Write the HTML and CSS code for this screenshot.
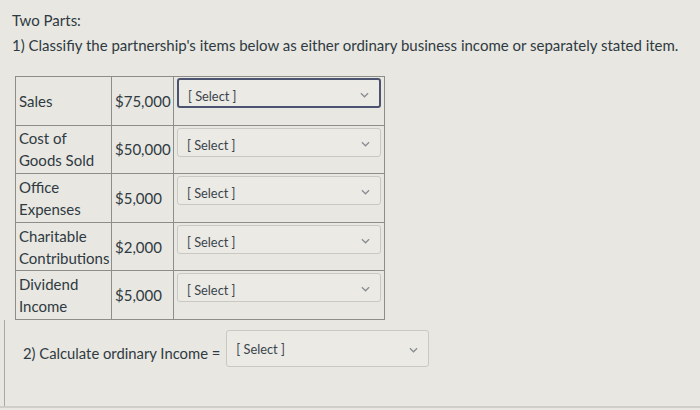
FILE: index.html
```html
<!DOCTYPE html>
<html>
<head>
<meta charset="utf-8">
<link rel="stylesheet" href="styles.css">
</head>
<body>
<div class="page">
  <p class="title">Two Parts:</p>
  <p class="intro">1) Classifiy the partnership's items below as either ordinary business income or separately stated item.</p>
  <table class="items">
    <tr>
      <td class="name">Sales</td>
      <td class="amt">$75,000</td>
      <td class="pick"><div class="select focused"><span>[ Select ]</span><svg class="chev" viewBox="0 0 10 6"><path d="M1 1l4 4 4-4"/></svg></div></td>
    </tr>
    <tr>
      <td class="name">Cost of<br>Goods Sold</td>
      <td class="amt">$50,000</td>
      <td class="pick"><div class="select"><span>[ Select ]</span><svg class="chev" viewBox="0 0 10 6"><path d="M1 1l4 4 4-4"/></svg></div></td>
    </tr>
    <tr>
      <td class="name">Office<br>Expenses</td>
      <td class="amt">$5,000</td>
      <td class="pick"><div class="select"><span>[ Select ]</span><svg class="chev" viewBox="0 0 10 6"><path d="M1 1l4 4 4-4"/></svg></div></td>
    </tr>
    <tr>
      <td class="name">Charitable<br>Contributions</td>
      <td class="amt">$2,000</td>
      <td class="pick"><div class="select"><span>[ Select ]</span><svg class="chev" viewBox="0 0 10 6"><path d="M1 1l4 4 4-4"/></svg></div></td>
    </tr>
    <tr>
      <td class="name">Dividend<br>Income</td>
      <td class="amt">$5,000</td>
      <td class="pick"><div class="select"><span>[ Select ]</span><svg class="chev" viewBox="0 0 10 6"><path d="M1 1l4 4 4-4"/></svg></div></td>
    </tr>
  </table>
  <div class="calc">
    <span class="calc-label">2) Calculate ordinary Income =</span>
    <div class="select wide"><span>[ Select ]</span><svg class="chev" viewBox="0 0 10 6"><path d="M1 1l4 4 4-4"/></svg></div>
  </div>
</div>
</body>
</html>
```
FILE: styles.css
```css
html, body {
  margin: 0;
  padding: 0;
}
body {
  width: 700px;
  height: 410px;
  overflow: hidden;
  background: #e8e7e1;
  font-family: Lato, "Open Sans", sans-serif;
  color: #2f3a42;
}
.page {
  height: 408px;
  border-bottom: 2px solid #cfcec8;
  padding: 10px 0 0 12px;
  box-sizing: border-box;
  position: relative;
}
.title {
  margin: 0;
  font-size: 15px;
  line-height: 20px;
}
.intro {
  margin: 5px 0 0 0;
  font-size: 15px;
  line-height: 20px;
}
.items {
  margin: 21px 0 0 3px;
  border-collapse: collapse;
}
.items td {
  border: 1px solid #8d8d89;
  padding: 0;
  height: 48.6px;
  box-sizing: border-box;
  font-size: 15px;
  line-height: 22px;
}
.name {
  width: 96px;
  padding-left: 3px !important;
  vertical-align: middle;
}
.amt {
  width: 62px;
  padding-left: 3px !important;
  vertical-align: middle;
}
.pick {
  width: 211px;
  vertical-align: top;
  padding: 2px 3px 0 3px !important;
}
.select {
  height: 29px;
  border: 1px solid #c9c8c2;
  border-radius: 3px;
  background: #ebeae5;
  display: flex;
  align-items: flex-start;
  justify-content: space-between;
  padding: 0 10px 0 9px;
  box-sizing: border-box;
  font-size: 12.8px;
  color: #3a444c;
}
.select span {
  margin-top: 5px;
}
.select.focused {
  border: 2px solid #4b5370;
  border-radius: 3px;
  height: 30px;
  margin-top: -1px;
}
.chev {
  width: 9px;
  height: 6px;
  margin-top: 12px;
  fill: none;
  stroke: #8a8d94;
  stroke-width: 1.4;
}
.calc {
  display: flex;
  align-items: flex-start;
  margin: 10px 0 0 11px;
}
.calc-label {
  font-size: 14.8px;
  line-height: 20px;
  margin-top: 13px;
  margin-right: 6px;
}
.select.wide {
  width: 203px;
  height: 37px;
}
.select.wide span {
  margin-top: 10px;
}
.select.wide .chev {
  margin-top: 16px;
}
.page::before {
  content: "";
  position: absolute;
  left: 4px;
  top: 320px;
  bottom: 0;
  width: 1px;
  background: #a9a8a3;
}
```
